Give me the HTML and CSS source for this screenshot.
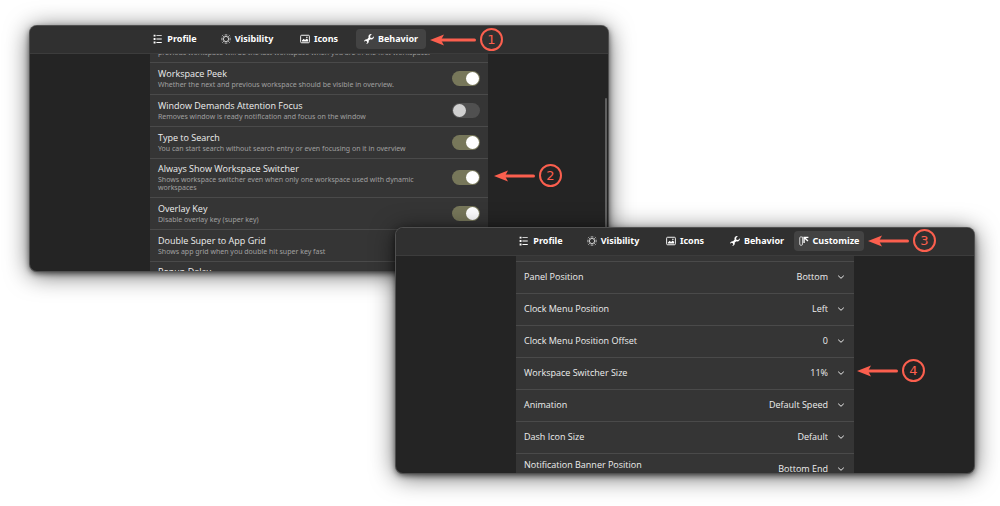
FILE: index.html
```html
<!DOCTYPE html>
<html lang="en">
<head>
<meta charset="utf-8">
<title>Extension settings</title>
<link rel="stylesheet" href="styles.css">
</head>
<body>
<svg class="sprite" aria-hidden="true">
  <symbol id="i-profile" viewBox="0 0 16 16"><path d="M1 1h3v3H1zM1 6.500h3v3H1zM1 12h3v3H1zM5.500 1.800H14v1.400H5.500zM5.500 7.300H14v1.400H5.500zM5.500 12.800H14v1.400H5.500z" fill="currentColor"/></symbol>
  <symbol id="i-visibility" viewBox="0 0 16 16"><circle cx="8" cy="8" r="4.200" fill="none" stroke="currentColor" stroke-width="1.200"/><path d="M8 0v2.800M8 13.200V16M0 8h2.800M13.200 8H16M2.300 2.300l2 2M11.700 11.700l2 2M2.300 13.700l2-2M11.700 4.300l2-2" stroke="currentColor" stroke-width="1.300"/><path d="M4.900.6l.7 1.700M10.400 13.700l.7 1.700M.6 11.100l1.700-.7M13.700 5.600l1.700-.7M.6 4.900l1.700.7M13.700 10.400l1.700.7M4.900 15.400l.7-1.700M10.400 2.300l.7-1.700" stroke="currentColor" stroke-width=".5"/></symbol>
  <symbol id="i-icons" viewBox="0 0 16 16"><rect x="1" y="2" width="14" height="12" rx="1.500" fill="none" stroke="currentColor" stroke-width="1.500"/><path d="M3 12v-1.500l3-3 2 2 3-2.500 2 2.500V12zM10 4.500h2v2h-2z" fill="currentColor"/></symbol>
  <symbol id="i-behavior" viewBox="0 0 16 16"><path d="M15.600 3.600 13 6.200 10.200 5.800 9.800 3 12.400.4C10-.5 7.200 1.200 7.100 4c0 .6.1 1.200.3 1.700L5 8.400C3 7.700 0 9.200 0 12.300l2.200-1.600 2.300.8.7 2.300L3.200 16C6.300 16 8.400 13.200 7.400 10.900l2.700-2.500c.6.2 1.200.3 1.900.3 2.800-.2 4.400-2.700 3.600-5.100z" fill="currentColor"/></symbol>
  <symbol id="i-customize" viewBox="0 0 16 16"><path d="M5 1.500H2.500Q1.200 1.500 1.200 3v10q0 1.800 1.600 1.800h1.400q1.300 0 1.300-1.500V1.500z" fill="none" stroke="currentColor" stroke-width="1.200"/><path d="M7 1h8v2.200H11L15 7l-1.400 1.600L9.200 4.800V11H7z" fill="currentColor"/></symbol>
  <symbol id="i-chevron" viewBox="0 0 8 8"><path d="M1.200 2.700 4 5.300 6.800 2.700" fill="none" stroke="currentColor" stroke-width="1"/></symbol>
  <symbol id="i-arrow" viewBox="0 0 46 12"><path d="M0 6 14 .5 11 6l3 5.500z" fill="currentColor"/><path d="M11 6h33.500" stroke="currentColor" stroke-width="3" stroke-linecap="round"/></symbol>
  <symbol id="i-arrow-short" viewBox="0 0 41 12"><path d="M0 6 14 .5 11 6l3 5.500z" fill="currentColor"/><path d="M11 6h28.500" stroke="currentColor" stroke-width="3" stroke-linecap="round"/></symbol>
</svg>

<main class="desktop">
  <section class="window window-back" aria-label="Behavior settings">
    <nav class="tabs">
      <button class="tab"><svg><use href="#i-profile"/></svg>Profile</button>
      <button class="tab"><svg><use href="#i-visibility"/></svg>Visibility</button>
      <button class="tab"><svg><use href="#i-icons"/></svg>Icons</button>
      <button class="tab active"><svg><use href="#i-behavior"/></svg>Behavior</button>
    </nav>
    <div class="body">
      <div class="list">
        <div class="row row-end"><span class="desc">previous workspace will be the last workspace when you are in the first workspace.</span></div>
        <label class="row"><span class="text"><span class="title">Workspace Peek</span><span class="desc">Whether the next and previous workspace should be visible in overview.</span></span><input class="switch" type="checkbox" checked></label>
        <label class="row"><span class="text"><span class="title">Window Demands Attention Focus</span><span class="desc">Removes window is ready notification and focus on the window</span></span><input class="switch" type="checkbox"></label>
        <label class="row"><span class="text"><span class="title">Type to Search</span><span class="desc">You can start search without search entry or even focusing on it in overview</span></span><input class="switch" type="checkbox" checked></label>
        <label class="row"><span class="text"><span class="title">Always Show Workspace Switcher</span><span class="desc">Shows workspace switcher even when only one workspace used with dynamic workspaces</span></span><input class="switch" type="checkbox" checked></label>
        <label class="row"><span class="text"><span class="title">Overlay Key</span><span class="desc">Disable overlay key (super key)</span></span><input class="switch" type="checkbox" checked></label>
        <label class="row"><span class="text"><span class="title">Double Super to App Grid</span><span class="desc">Shows app grid when you double hit super key fast</span></span><input class="switch" type="checkbox" checked></label>
        <div class="row row-start"><span class="title">Popup Delay</span></div>
      </div>
      <div class="scrollbar"></div>
    </div>
  </section>

  <section class="window window-front" aria-label="Customize settings">
    <nav class="tabs">
      <button class="tab"><svg><use href="#i-profile"/></svg>Profile</button>
      <button class="tab"><svg><use href="#i-visibility"/></svg>Visibility</button>
      <button class="tab"><svg><use href="#i-icons"/></svg>Icons</button>
      <button class="tab"><svg><use href="#i-behavior"/></svg>Behavior</button>
      <button class="tab active"><svg><use href="#i-customize"/></svg>Customize</button>
    </nav>
    <div class="body">
      <div class="list">
        <label class="row"><span class="title">Panel Position</span><select><option>Bottom</option></select><svg class="chevron"><use href="#i-chevron"/></svg></label>
        <label class="row"><span class="title">Clock Menu Position</span><select><option>Left</option></select><svg class="chevron"><use href="#i-chevron"/></svg></label>
        <label class="row"><span class="title">Clock Menu Position Offset</span><select><option>0</option></select><svg class="chevron"><use href="#i-chevron"/></svg></label>
        <label class="row"><span class="title">Workspace Switcher Size</span><select><option>11%</option></select><svg class="chevron"><use href="#i-chevron"/></svg></label>
        <label class="row"><span class="title">Animation</span><select><option>Default Speed</option></select><svg class="chevron"><use href="#i-chevron"/></svg></label>
        <label class="row"><span class="title">Dash Icon Size</span><select><option>Default</option></select><svg class="chevron"><use href="#i-chevron"/></svg></label>
        <label class="row"><span class="text"><span class="title">Notification Banner Position</span><span class="desc">Notification banner position and other notification</span></span><select><option>Bottom End</option></select><svg class="chevron"><use href="#i-chevron"/></svg></label>
      </div>
    </div>
  </section>

  <div class="callout c1"><svg><use href="#i-arrow"/></svg><span>1</span></div>
  <div class="callout c2"><svg><use href="#i-arrow-short"/></svg><span>2</span></div>
  <div class="callout c3"><svg><use href="#i-arrow-short"/></svg><span>3</span></div>
  <div class="callout c4"><svg><use href="#i-arrow-short"/></svg><span>4</span></div>
</main>
</body>
</html>
```
FILE: styles.css
```css
* { box-sizing: border-box; }

body {
  margin: 0;
  background: #fff;
  color: #eee;
  font: 9px/12px "Open Sans", "Noto Sans", sans-serif;
}

.sprite { position: absolute; width: 0; height: 0; }

.desktop { position: relative; min-height: 100vh; overflow: hidden; }

.window {
  position: absolute;
  display: flex;
  flex-direction: column;
  width: 57.8%;
  height: 245px;
  overflow: hidden;
  border-radius: 7px;
  background: #242424;
  box-shadow: 0 0 0 1px #505050, 0 2px 6px rgba(0, 0, 0, .7), 0 3px 24px rgba(0, 0, 0, .65);
}
.window-back { left: 3%; top: 26px; }
.window-front { left: 39.6%; top: 228px; }

.tabs {
  display: grid;
  grid-template-columns: repeat(5, 70px);
  justify-content: center;
  gap: 2px;
  padding: 3px 0 4px;
  border-bottom: 1px solid #3c3c3c;
  background: #303030;
}

.tab {
  display: flex;
  align-items: center;
  justify-content: center;
  gap: 4px;
  height: 20px;
  padding: 0;
  border: 0;
  border-radius: 4px;
  background: none;
  color: #fff;
  font: bold 9px/12px "Noto Sans", "Open Sans", sans-serif;
}
.tab.active { background: #434343; }
.tab svg { width: 10px; height: 10px; }

.body { position: relative; flex: 1; overflow: hidden; }

.list { max-width: 338px; margin: 0 auto; background: #353535; }
.window-back .list { margin-top: -24px; }
.window-front .list { margin-top: 5px; box-shadow: 0 -5px #353535; }

.row {
  display: flex;
  align-items: center;
  min-height: 32px;
  padding: 4px 8px 5px;
  border-top: 1px solid #4a4a4a;
}
.row-start { align-items: flex-start; }
.row-end { align-items: flex-end; }

.text { display: flex; flex: 1; flex-direction: column; gap: 1px; padding-right: 16px; }
.title { flex: 1; }
.desc { color: #a0a0a0; font: 7px/8px "Noto Sans", "Open Sans", sans-serif; }

.switch {
  appearance: none;
  width: 28px;
  height: 15px;
  margin: 0;
  padding: 1px;
  border-radius: 8px;
  background: #505050;
}
.switch::before {
  content: "";
  display: block;
  width: 13px;
  height: 13px;
  border-radius: 50%;
  background: #d0d0d0;
}
.switch:checked { background: #77775a; }
.switch:checked::before { margin-left: auto; background: #fff; }

select {
  appearance: none;
  padding: 0;
  border: 0;
  background: none;
  color: inherit;
  font: inherit;
  text-align: right;
}
.chevron { width: 8px; height: 8px; margin-left: 9px; margin-right: 1px; }

.scrollbar {
  position: absolute;
  top: 44px;
  right: 1px;
  bottom: 0;
  width: 2px;
  border-radius: 1px;
  background: #606060;
}

.callout {
  position: absolute;
  display: flex;
  align-items: center;
  gap: 4px;
  color: #fb5f4e;
}
.callout svg { width: 41px; height: 12px; }
.callout span {
  width: 23px;
  height: 23px;
  border: 2px solid;
  border-radius: 50%;
  font: 13px/19px "DejaVu Sans", sans-serif;
  text-align: center;
}
.c1 { left: 43%; top: 28px; }
.c1 svg { width: 46px; }
.c2 { left: 49.4%; top: 164px; }
.c3 { left: 86.8%; top: 229px; }
.c4 { left: 85.7%; top: 359px; }
```
